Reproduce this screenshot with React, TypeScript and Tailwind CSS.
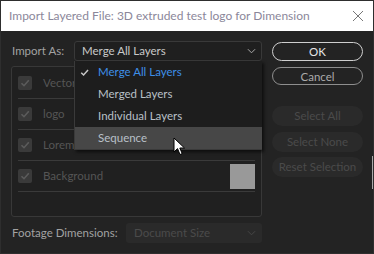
import React from "react";

const font = { fontFamily: 'Lato, "Noto Sans", sans-serif' };

function Check({ className }: { className: string }) {
  return (
    <svg viewBox="0 0 14 14" className={className} fill="none">
      <path d="M3.5 7.2 L6 9.7 L10.8 4.3" stroke="currentColor" strokeWidth="1.6" />
    </svg>
  );
}

function Chevron({ className }: { className: string }) {
  return (
    <svg viewBox="0 0 10 6" className={className} fill="none">
      <path d="M1 1 L5 5 L9 1" stroke="currentColor" strokeWidth="1.1" />
    </svg>
  );
}

const layers = [
  { name: "Vector", swatch: false },
  { name: "logo", swatch: false },
  { name: "Lorem", swatch: false },
  { name: "Background", swatch: true },
];

const menuItems = ["Merge All Layers", "Merged Layers", "Individual Layers", "Sequence"];

export default function App() {
  return (
    <div
      className="relative w-[374px] h-[254px] flex flex-col border border-[#2e2e2e] bg-[#232323] overflow-hidden text-[11.5px] whitespace-nowrap"
      style={font}
    >
      {/* Title bar */}
      <div className="h-[30px] bg-white flex items-center justify-between pl-[8px] pr-[9px] shrink-0">
        <span className="text-[#8b879a] text-[12px]">
          Import Layered File: 3D extruded test logo for Dimension
        </span>
        <svg viewBox="0 0 12 12" className="w-[12px] h-[12px] text-[#777]" fill="none">
          <path d="M1 1 L11 11 M11 1 L1 11" stroke="currentColor" strokeWidth="1" />
        </svg>
      </div>

      {/* Body */}
      <div className="flex-1 flex pl-[10px] pr-[10px] gap-[10px]">
        {/* Left column */}
        <div className="w-[251px] flex flex-col">
          <div className="mt-[10px] h-[20px] flex items-center">
            <span className="w-[63px] pl-[1px] text-[#a2a2a2]">Import As:</span>
            <div className="flex-1 h-[20px] flex items-center justify-between pl-[7px] pr-[5px] border border-[#393939] bg-[#1f1f1f] rounded-[3px] text-[#c9c9c9]">
              <span>Merge All Layers</span>
              <Chevron className="w-[9px] h-[6px] text-[#aaa]" />
            </div>
          </div>

          {/* Layers panel */}
          <div className="mt-[5px] h-[151px] border border-[#383838] rounded-[3px] bg-[#202020] pt-[1px] px-[6px]">
            {layers.map((l) => (
              <div key={l.name}>
                <div className="h-[30px] flex items-center">
                  <div className="w-[14px] h-[14px] rounded-[2px] bg-[#3a3a3a] flex items-center justify-center">
                    <Check className="w-[14px] h-[14px] text-[#5c5c5c]" />
                  </div>
                  <span className="ml-[11px] text-[#555555]">{l.name}</span>
                  {l.swatch && <div className="ml-auto w-[25px] h-[25px] bg-[#999999]" />}
                </div>
                <div className="h-[1px] bg-[#3a3a3a]" />
              </div>
            ))}
          </div>

          <div className="mt-[6px] h-[20px] flex items-center">
            <span className="w-[115px] pl-[1px] text-[#a2a2a2]">Footage Dimensions:</span>
            <div className="flex-1 h-[20px] flex items-center justify-between pl-[8px] pr-[6px] bg-[#2a2a2a] rounded-[3px] text-[#4b4b4b]">
              <span>Document Size</span>
              <Chevron className="w-[9px] h-[6px] text-[#474747]" />
            </div>
          </div>
        </div>

        {/* Right column */}
        <div className="w-[91px] flex flex-col">
          <button className="mt-[11px] h-[19px] rounded-full border border-[#cfcfcf] text-[#e6e6e6]">OK</button>
          <button className="mt-[6px] h-[18px] rounded-full border border-[#8e8e8e] text-[#ababab]">Cancel</button>
          <button className="mt-[21px] h-[20px] rounded-full bg-[#2a2a2a] text-[#4a4a4a]">Select All</button>
          <button className="mt-[6px] h-[20px] rounded-full bg-[#2a2a2a] text-[#4a4a4a]">Select None</button>
          <button className="mt-[5px] h-[20px] rounded-full bg-[#2a2a2a] text-[#4a4a4a]">Reset Selection</button>
        </div>
      </div>

      {/* Dropdown menu */}
      <div className="absolute left-[73px] top-[60px] w-[188px] bg-[#1d1d1d] border-l border-b border-[#3a3a3a] shadow-[2px_2px_3px_rgba(0,0,0,0.6)]">
        {menuItems.map((m, i) => (
          <div
            key={m}
            className={`h-[22px] flex items-center ${i === 3 ? "bg-[#474747]" : ""}`}
          >
            <div className="w-[23px] flex justify-start pl-[3px]">
              {i === 0 && <Check className="w-[13px] h-[13px] text-[#c8c8c8]" />}
            </div>
            <span className={i === 0 ? "text-[#3d8fe8]" : "text-[#b9c0c8]"}>{m}</span>
          </div>
        ))}
      </div>

      {/* Mouse cursor */}
      <svg className="absolute left-[172px] top-[136px] w-[14px] h-[20px]" viewBox="0 0 14 20">
        <path
          d="M1 1 L1 15 L4.5 11.6 L7 17.5 L9.2 16.6 L6.8 11 L11.5 11 Z"
          fill="white"
          stroke="black"
          strokeWidth="1"
          strokeLinejoin="round"
        />
      </svg>

      {/* resize edge */}
      <div className="absolute right-0 top-[155px] w-[1px] h-[33px] bg-[#aaaaaa]" />
    </div>
  );
}
